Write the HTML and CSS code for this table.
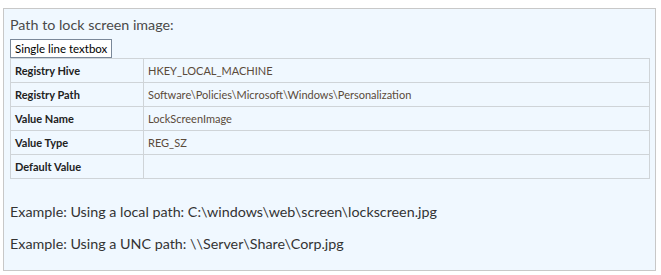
FILE: index.html
```html
<!DOCTYPE html>
<html lang="en">
<head>
    <meta charset="UTF-8">
    <title>Path to lock screen image</title>
    <link rel="stylesheet" href="styles.css">
</head>
<body>
    <div class="policy">
        <p class="label">Path to lock screen image:</p>
        <div class="control">Single line textbox</div>
        <table class="registry">
            <tr><th>Registry Hive</th><td>HKEY_LOCAL_MACHINE</td></tr>
            <tr><th>Registry Path</th><td>Software\Policies\Microsoft\Windows\Personalization</td></tr>
            <tr><th>Value Name</th><td>LockScreenImage</td></tr>
            <tr><th>Value Type</th><td>REG_SZ</td></tr>
            <tr><th>Default Value</th><td></td></tr>
        </table>
        <p class="example">Example: Using a local path: C:\windows\web\screen\lockscreen.jpg</p>
        <p class="example">Example: Using a UNC path: \\Server\Share\Corp.jpg</p>
    </div>
</body>
</html>
```

FILE: styles.css
```css
* {
    margin: 0;
    padding: 0;
    box-sizing: border-box;
}

body {
    font-family: 'Lato', sans-serif;
    color: #333;
    background: #fff;
    padding: 8px 5px 0 3px;
}

.policy {
    width: 653px;
    height: 263px;
    background: #f0f8ff;
    border: 1px solid #c8c8c8;
    padding: 5px 6px 0 6px;
}

.label {
    font-size: 14.3px;
    line-height: 22px;
    color: #4a4a4a;
    margin-bottom: 1px;
}

.control {
    display: inline-block;
    background: #fff;
    border: 1px solid #7a8899;
    font-size: 11.5px;
    line-height: 17px;
    padding: 0 4px;
    color: #000;
}

.registry {
    width: 640px;
    border-collapse: collapse;
    font-size: 11px;
}

.registry th,
.registry td {
    border: 1px solid #cfd4d8;
    height: 24px;
    padding: 0 4px;
    text-align: left;
    vertical-align: middle;
}

.registry th {
    width: 133px;
    font-weight: 700;
    color: #222;
}

.registry td {
    color: #5a4a3a;
}

.example {
    font-size: 14.3px;
    line-height: 20px;
    color: #333;
    margin-top: 23px;
}

.example + .example {
    margin-top: 12px;
}
```
